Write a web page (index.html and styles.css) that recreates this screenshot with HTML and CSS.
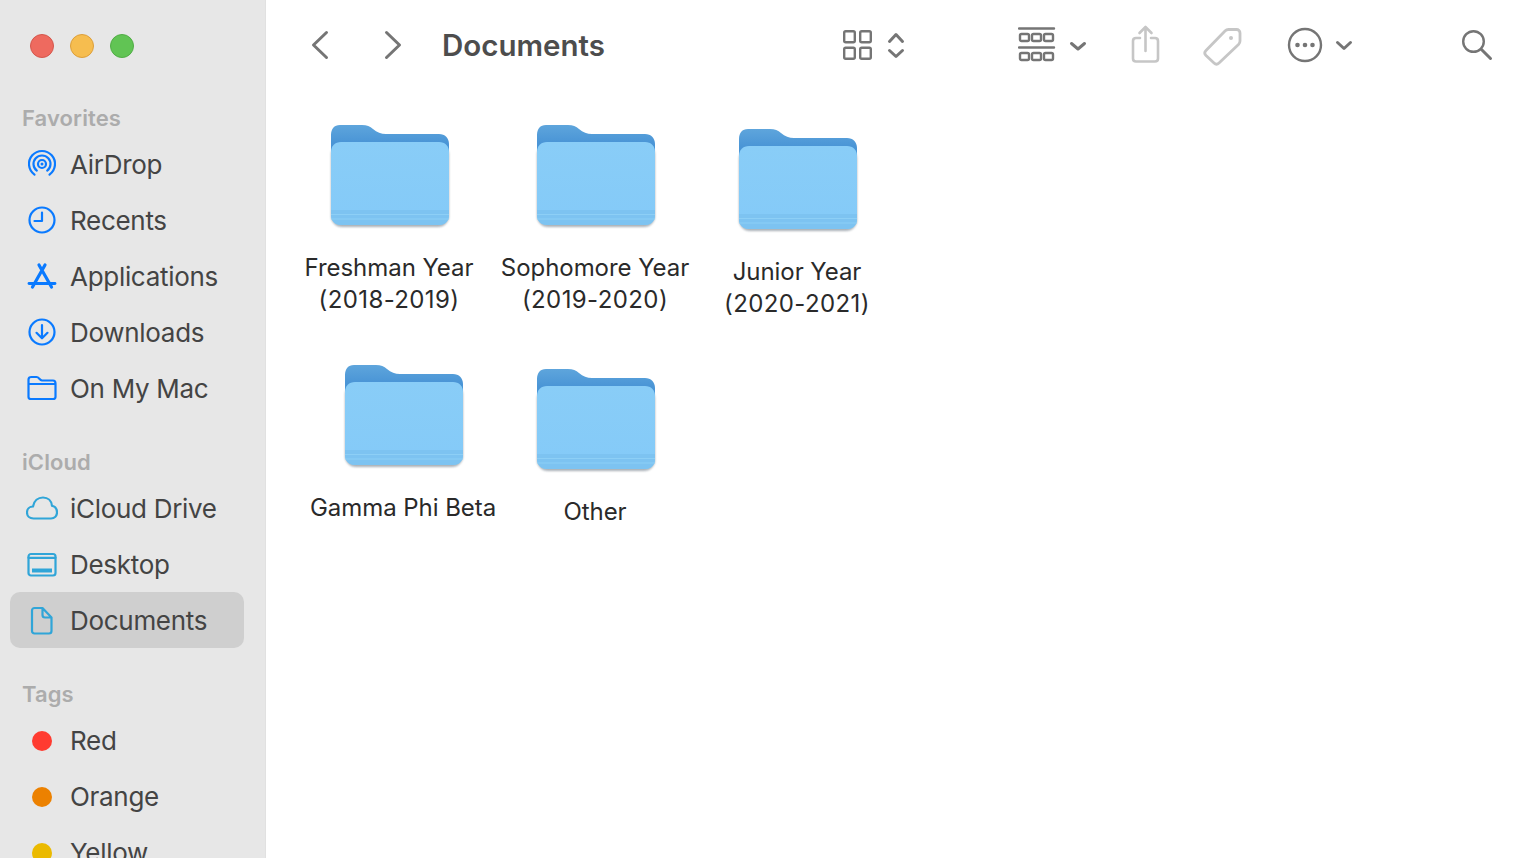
FILE: index.html
```html
<!DOCTYPE html>
<html lang="en">
<head>
<meta charset="utf-8">
<title>Documents</title>
<link rel="stylesheet" href="styles.css">
</head>
<body>
<svg class="defs" width="0" height="0" aria-hidden="true">
  <defs>
    <linearGradient id="fb" x1="0" y1="0" x2="0" y2="1"><stop offset="0" stop-color="#5ea5dc"/><stop offset=".2" stop-color="#4a95d6"/><stop offset="1" stop-color="#3f8ed2"/></linearGradient>
    <linearGradient id="ff" x1="0" y1="0" x2="0" y2="1"><stop offset="0" stop-color="#89cdf7"/><stop offset="1" stop-color="#84caf8"/></linearGradient>
    <filter id="soft" x="-5%" y="-5%" width="110%" height="110%"><feGaussianBlur stdDeviation=".8"/></filter>
    <symbol id="folder" viewBox="0 0 124 106">
      <rect x="3" y="20" width="118" height="83" rx="11" fill="#6f7b86" opacity=".6" filter="url(#soft)"/>
      <path d="M3 90V11C3 5 6 1 12 1H34C39 1 42 2.500 45 5C49 8.500 53 10 58 10H111C117 10 121 14 121 20V90Z" fill="url(#fb)"/>
      <path d="M3 28C3 22 7 18 13 18H111C117 18 121 22 121 28V91C121 97 117 101 111 101H13C7 101 3 97 3 91Z" fill="url(#ff)"/>
      <path d="M3 86H121V91C121 97 117 101 111 101H13C7 101 3 97 3 91Z" fill="#7dc3f1"/>
      <path d="M3 90.500H121M3 95H121" stroke="#8dcff6" stroke-width="1"/>
    </symbol>
  </defs>
</svg>
<div class="window">
  <aside class="sidebar">
    <div class="lights">
      <span class="light red"></span><span class="light yellow"></span><span class="light green"></span>
    </div>
    <section class="group">
      <h2 class="group-title">Favorites</h2>
      <ul class="list">
        <li class="item"><svg class="ico blue" viewBox="0 0 32 32"><circle cx="16" cy="16" r="4"/><circle cx="16" cy="16" r="1.500" fill="currentColor" stroke="none"/><path d="M10.800 22.700A8.500 8.500 0 1 1 21.200 22.700M8.500 26.600A13 13 0 1 1 23.500 26.600"/></svg><span>AirDrop</span></li>
        <li class="item"><svg class="ico blue" viewBox="0 0 32 32"><circle cx="16" cy="16" r="12.500"/><path d="M16 8.500V17H8.500"/></svg><span>Recents</span></li>
        <li class="item"><svg class="ico blue" viewBox="0 0 32 32"><path class="app-legs" d="M13 5L25.500 27M19 5L6.500 27"/><path class="app-bar" d="M3 23.500H29"/></svg><span>Applications</span></li>
        <li class="item"><svg class="ico blue" viewBox="0 0 32 32"><circle cx="16" cy="16" r="12.500"/><path d="M16 9V22M10.500 16.800L16 22.300L21.500 16.800"/></svg><span>Downloads</span></li>
        <li class="item"><svg class="ico blue" viewBox="0 0 32 32"><path d="M2.500 7.500C2.500 5.800 3.500 5 5.500 5H10.500C13 5 13.500 8 16 8.500H27C29 8.500 29.500 9.500 29.500 11.500V25C29.500 26.500 28.500 27 27 27H5C3.500 27 2.500 26.500 2.500 25ZM2.500 12H29.500"/></svg><span>On My Mac</span></li>
      </ul>
    </section>
    <section class="group">
      <h2 class="group-title">iCloud</h2>
      <ul class="list">
        <li class="item"><svg class="ico cyan" viewBox="0 0 32 32"><path d="M7.500 26.500C3.500 26.500 1 24 1 20.500C1 17 3.500 14.500 7 14.500C8 9 12 5.500 17 5.500C22 5.500 25.500 9 26 13.800C29 14.500 31 17 31 20.300C31 24 28.500 26.500 25 26.500Z"/></svg><span>iCloud Drive</span></li>
        <li class="item"><svg class="ico cyan" viewBox="0 0 32 32"><rect x="2.500" y="6" width="27" height="21.500" rx="2.500"/><path d="M2.500 9.800H29.500"/><rect x="6" y="20.500" width="20" height="4" fill="currentColor" stroke="none"/></svg><span>Desktop</span></li>
        <li class="item active"><svg class="ico cyan" viewBox="0 0 32 32"><path d="M6 6.500C6 5 7 4 8.500 4H16.500L25.500 13.500V27C25.500 28.500 24.500 29.500 23 29.500H8.500C7 29.500 6 28.500 6 27ZM16.500 4V11C16.500 12.500 17.500 13.500 19 13.500H25.500"/></svg><span>Documents</span></li>
      </ul>
    </section>
    <section class="group">
      <h2 class="group-title">Tags</h2>
      <ul class="list">
        <li class="item"><span class="tag tag-red"></span><span>Red</span></li>
        <li class="item"><span class="tag tag-orange"></span><span>Orange</span></li>
        <li class="item"><span class="tag tag-yellow"></span><span>Yellow</span></li>
      </ul>
    </section>
  </aside>
  <main class="content">
    <header class="toolbar">
      <svg class="tb tb-back" viewBox="0 0 20 32"><path d="M16.500 3.500L3.500 16L16.500 28.500"/></svg>
      <svg class="tb tb-forward" viewBox="0 0 20 32"><path d="M3.500 3.500L16.500 16L3.500 28.500"/></svg>
      <h1 class="title">Documents</h1>
      <svg class="tb tb-view" viewBox="0 0 64 32"><rect x="2.200" y="2.200" width="10.600" height="11" rx="1.500"/><rect x="18.200" y="2.200" width="10.600" height="11" rx="1.500"/><rect x="2.200" y="18.800" width="10.600" height="11" rx="1.500"/><rect x="18.200" y="18.800" width="10.600" height="11" rx="1.500"/><path d="M47.500 12.500L54 5.500L60.500 12.500M47.500 21.500L54 27.500L60.500 21.500"/></svg>
      <svg class="tb tb-group" viewBox="0 0 70 36"><path d="M1 1.500H36M1 20.500H36"/><rect x="2" y="7" width="9" height="7" rx="1.500"/><rect x="14" y="7" width="9" height="7" rx="1.500"/><rect x="26" y="7" width="9" height="7" rx="1.500"/><rect x="2" y="26" width="9" height="7" rx="1.500"/><rect x="14" y="26" width="9" height="7" rx="1.500"/><rect x="26" y="26" width="9" height="7" rx="1.500"/><path class="chev" d="M53.500 16.500L60 22L66.500 16.500"/></svg>
      <svg class="tb tb-share" viewBox="0 0 32 38"><path d="M10 13H6C4 13 3 14 3 16V33.500C3 35.500 4 36.500 6 36.500H25C27 36.500 28 35.500 28 33.500V16C28 14 27 13 25 13H21M15.500 26V2.500M9.500 8L15.500 2L21.500 8"/></svg>
      <svg class="tb tb-tag" viewBox="0 0 40 40"><path d="M3 24.500L22 5C23 4 24 3.500 25.500 3.500H33.500C35.500 3.500 37 5 37 7V15C37 16.500 36.500 17.500 35.500 18.500L16 37C14.500 38.500 12.500 38.500 11 37L3 29.500C1.500 28 1.500 26 3 24.500Z"/><circle cx="28" cy="12" r="2" class="tag-dot"/></svg>
      <svg class="tb tb-more" viewBox="0 0 67 36"><circle cx="18" cy="18" r="16"/><circle cx="10.500" cy="18" r="2.300" class="more-dot"/><circle cx="18" cy="18" r="2.300" class="more-dot"/><circle cx="25.500" cy="18" r="2.300" class="more-dot"/><path class="chev" d="M50.500 15.500L57 21.500L63.500 15.500"/></svg>
      <svg class="tb tb-search" viewBox="0 0 34 34"><circle cx="13.500" cy="13.500" r="10.300"/><path class="chev" d="M21.500 21.500L30.500 30.500"/></svg>
    </header>
    <div class="canvas">
      <figure class="file f1"><svg class="folder"><use href="#folder"/></svg><figcaption>Freshman Year<br><span class="years">(2018-2019)</span></figcaption></figure>
      <figure class="file f2"><svg class="folder"><use href="#folder"/></svg><figcaption>Sophomore Year<br><span class="years">(2019-2020)</span></figcaption></figure>
      <figure class="file f3"><svg class="folder"><use href="#folder"/></svg><figcaption>Junior Year<br><span class="years">(2020-2021)</span></figcaption></figure>
      <figure class="file f4"><svg class="folder"><use href="#folder"/></svg><figcaption>Gamma Phi Beta</figcaption></figure>
      <figure class="file f5"><svg class="folder"><use href="#folder"/></svg><figcaption>Other</figcaption></figure>
    </div>
  </main>
</div>
</body>
</html>
```

FILE: styles.css
```css
* { box-sizing: border-box; }
html, body { margin: 0; height: 100%; overflow: hidden; }
body { font-family: Inter, "Liberation Sans", sans-serif; background: #fff; color: #222; }
.defs { position: absolute; }
.window { display: flex; height: 858px; }

.sidebar { width: 266px; flex: none; height: 858px; overflow: hidden; background: #e7e7e7; border-right: 1px solid #e1e1e1; padding: 0 21px 0 10px; }
.lights { display: flex; gap: 16px; height: 104px; padding: 34px 0 0 20px; }
.light { width: 24px; height: 24px; border-radius: 50%; border: 1px solid; }
.red { background: #ee6a5f; border-color: #d4574d; }
.yellow { background: #f6bd4f; border-color: #dd9f3a; }
.green { background: #61c454; border-color: #51ad46; }

.group { margin-bottom: 32px; }
.group-title { margin: 0 0 4px 12px; height: 28px; font-size: 22px; line-height: 28px; font-weight: 600; color: #acacac; letter-spacing: .1px; }
.list { list-style: none; margin: 0; padding: 0; }
.item { display: flex; align-items: center; height: 56px; border-radius: 10px; padding-left: 16px; gap: 12px; font-size: 26px; color: #444; white-space: nowrap; letter-spacing: -.3px; }
.item.active { background: #cfcfcf; }
.ico { width: 32px; height: 32px; flex: none; fill: none; stroke: currentColor; stroke-width: 2.200; stroke-linecap: round; stroke-linejoin: round; }
.app-legs { stroke-width: 3.200; }
.app-bar { stroke-width: 2.800; }
.blue { color: #0a7aff; }
.cyan { color: #30a5d8; }
.tag { width: 20px; height: 20px; margin: 2px 6px 0; border-radius: 50%; flex: none; }
.tag-red { background: #ff3b30; }
.tag-orange { background: #ec8100; }
.tag-yellow { background: #ebba00; }

.content { flex: 1; min-width: 0; }
.toolbar { display: flex; align-items: center; height: 90px; margin-bottom: 2px; padding-left: 44px; }
.tb { flex: none; fill: none; stroke: #757575; stroke-width: 2.400; stroke-linecap: round; stroke-linejoin: round; }
.tb-back { width: 20px; height: 32px; stroke-width: 3; }
.tb-forward { width: 20px; height: 32px; margin-left: 53px; stroke-width: 3; }
.title { margin: 0 0 0 39px; width: 400px; flex: none; font-size: 29.500px; font-weight: 600; color: #4d4d4d; }
.tb-view { width: 64px; height: 32px; }
.tb-view path, .chev { stroke-width: 3; }
.tb-group { width: 70px; height: 36px; margin-left: 112px; }
.tb-share { width: 32px; height: 38px; margin-left: 42px; margin-top: -2px; stroke: #c6c6c6; stroke-width: 2.600; }
.tb-tag { width: 40px; height: 40px; margin-left: 41px; margin-top: 2px; stroke: #c6c6c6; stroke-width: 2.800; }
.tag-dot { fill: #c6c6c6; stroke: none; }
.tb-more { width: 67px; height: 36px; margin-left: 44px; }
.more-dot { fill: #757575; stroke: none; }
.tb-search { width: 34px; height: 34px; margin-left: 106px; }

.canvas { position: relative; height: 766px; }
.file { position: absolute; margin: 0; width: 200px; display: flex; flex-direction: column; align-items: center; }
.folder { width: 124px; height: 106px; flex: none; }
.file figcaption { margin: 22px 2px 0 0; font-size: 24px; line-height: 32px; color: #2a2a2a; text-align: center; white-space: nowrap; letter-spacing: -.05px; }
.years { letter-spacing: .4px; }
.f1 { left: 24px; top: 32px; }
.f2 { left: 230px; top: 32px; }
.f3 { left: 432px; top: 36px; }
.f4 { left: 38px; top: 272px; }
.f5 { left: 230px; top: 276px; }
```
